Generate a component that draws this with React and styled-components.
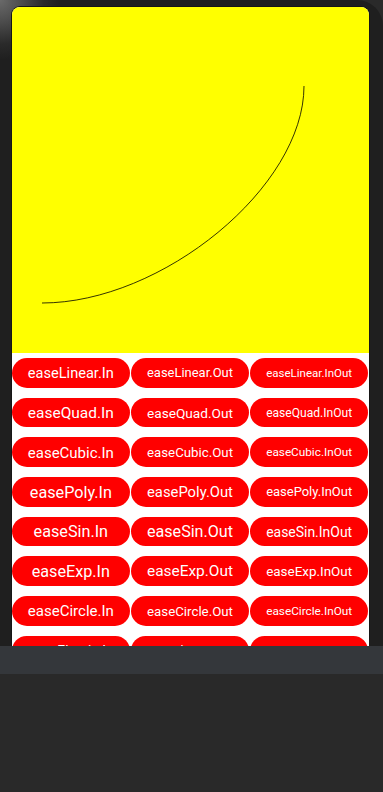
import { useLayoutEffect, useRef, useState } from "react";
import styled, { createGlobalStyle } from "styled-components";

const GlobalStyle = createGlobalStyle`
  html, body {
    margin: 0;
    padding: 0;
    background: #2a2a2a;
  }
  #root {
    height: 792px;
  }
`;

const Device = styled.div`
  display: flex;
  flex-direction: column;
  height: 792px;
  overflow: hidden;
  background: #2a2a2a;
`;

const Bezel = styled.div`
  padding: 7px 14px 0 12px;
  background:
    radial-gradient(circle at 0 0, #6a6a6a 0, #4c4c4c 22px, #2a2a2a 44px, #1f1f1f 60px),
    #1e1e1e;
  border-radius: 0 26px 0 0;
`;

const Screen = styled.div`
  display: flex;
  flex-direction: column;
  height: 639px;
  overflow: hidden;
  background: #ffffff;
  border-radius: 8px 8px 0 0;
  box-shadow: 0 0 0 1px #161616;
`;

const Stage = styled.div`
  flex: none;
  height: 346px;
  background: #ffff00;

  svg {
    display: block;
  }
`;

const ButtonGrid = styled.div`
  display: grid;
  grid-template-columns: repeat(3, 1fr);
  column-gap: 1.5px;
  row-gap: 10.2px;
  padding: 5px 1px 0 0;
`;

const EaseButton = styled.button`
  height: 29.5px;
  border: none;
  border-radius: 15px;
  background: #ff0000;
  color: #ffffff;
  font-family: Roboto, "Noto Sans", sans-serif;
  display: flex;
  align-items: center;
  justify-content: center;
  padding: 2px 0 0;
  white-space: nowrap;
  cursor: pointer;
`;

const Label = styled.span`
  display: inline-block;
  line-height: 1;
`;

const NavBar = styled.div`
  flex: none;
  height: 28px;
  background: #34373b;
`;

const Base = styled.div`
  flex: 1;
  background: #292929;
`;

const MAX_SIZE = 16.2;
const FIT_WIDTH = 86;

// label shrinks until it fits the pill, like the device's auto-sized text
function FitLabel({ children }) {
  const ref = useRef(null);
  const [size, setSize] = useState(MAX_SIZE);

  useLayoutEffect(() => {
    const el = ref.current;
    if (!el) return;
    el.style.fontSize = MAX_SIZE + "px";
    const w = el.getBoundingClientRect().width;
    setSize(w > FIT_WIDTH ? (MAX_SIZE * FIT_WIDTH) / w : MAX_SIZE);
  }, [children]);

  return (
    <Label ref={ref} style={{ fontSize: size + "px" }}>
      {children}
    </Label>
  );
}

const curves = [
  "Linear",
  "Quad",
  "Cubic",
  "Poly",
  "Sin",
  "Exp",
  "Circle",
  "Elastic",
  "Back",
  "Bounce",
];

const modes = ["In", "Out", "InOut"];

export default function App() {
  return (
    <>
      <GlobalStyle />
      <Device>
        <Bezel>
          <Screen>
            <Stage>
              <svg width="357" height="346" viewBox="0 0 357 346">
                <path
                  d="M30 296 C150 296 292 180 292 79"
                  fill="none"
                  stroke="#000"
                  strokeWidth="0.8"
                />
              </svg>
            </Stage>
            <ButtonGrid>
              {curves.map((c) =>
                modes.map((m) => (
                  <EaseButton key={c + m}>
                    <FitLabel>{`ease${c}.${m}`}</FitLabel>
                  </EaseButton>
                ))
              )}
            </ButtonGrid>
          </Screen>
        </Bezel>
        <NavBar />
        <Base />
      </Device>
    </>
  );
}
